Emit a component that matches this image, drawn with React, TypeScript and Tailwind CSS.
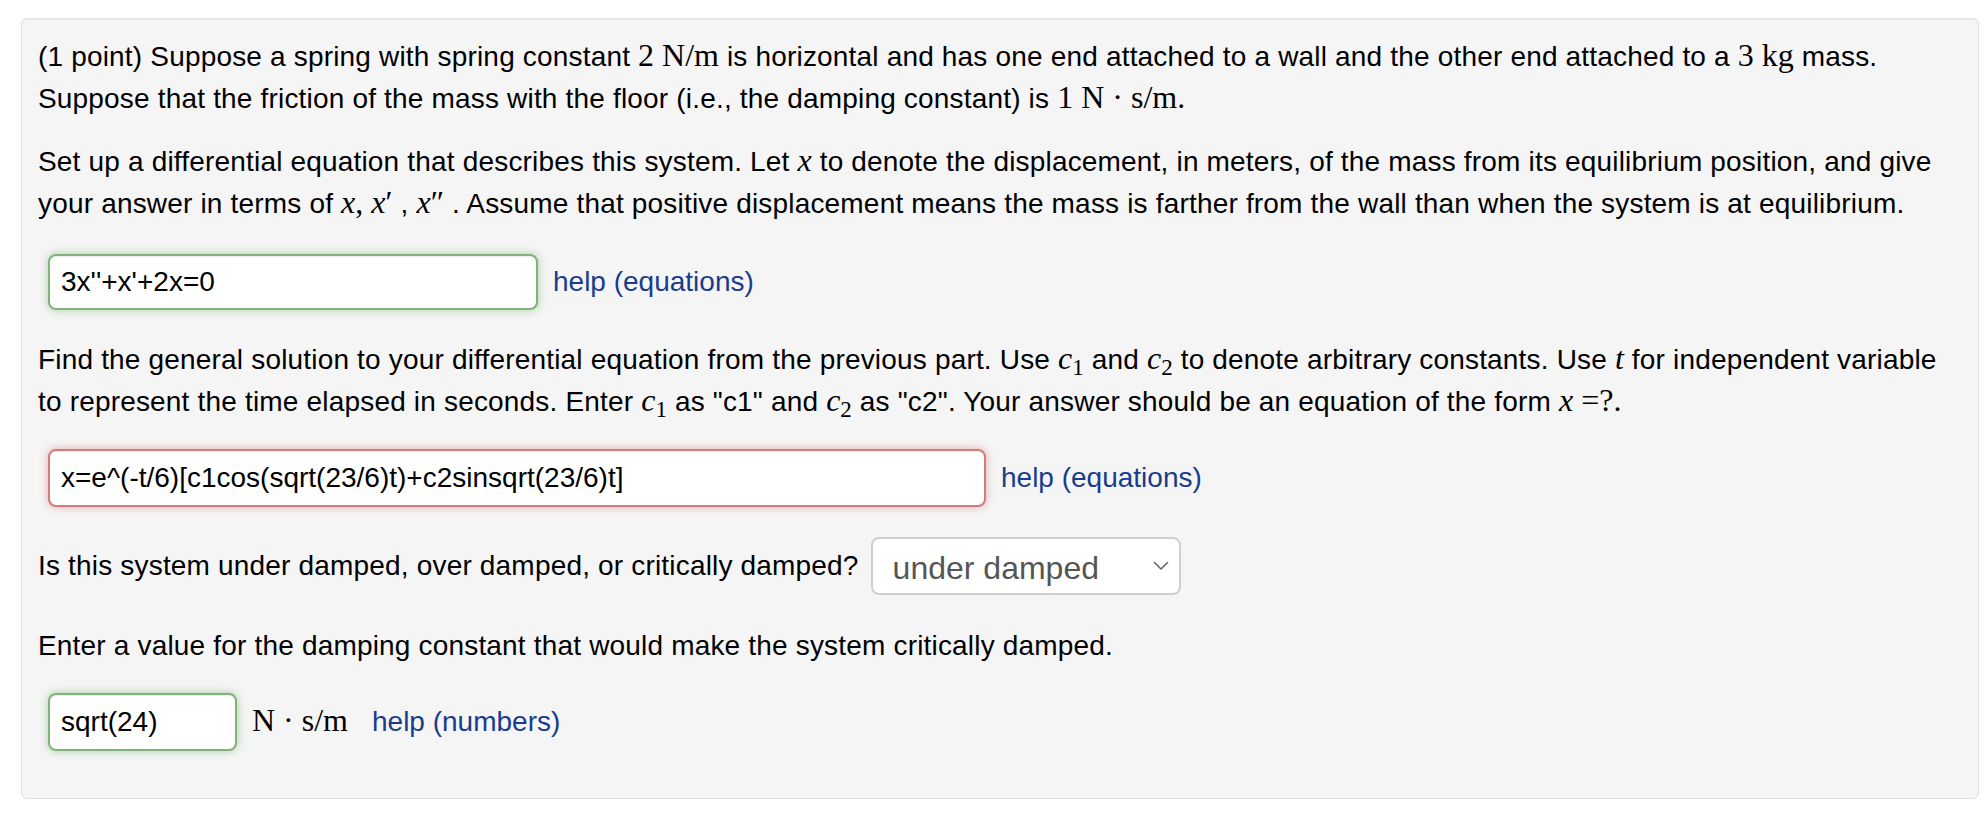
import React from "react";

function M({ children }: { children: React.ReactNode }) {
  return (
    <span className="font-['Liberation_Serif','Times_New_Roman',serif] text-[32px] leading-[0] tracking-normal">
      {children}
    </span>
  );
}

function I({ children }: { children: React.ReactNode }) {
  return <span className="italic">{children}</span>;
}

function Sub({ children }: { children: React.ReactNode }) {
  return <span className="align-[-6px] text-[23px] leading-[0] not-italic">{children}</span>;
}

function Help({ label, className }: { label: string; className: string }) {
  return <span className={`whitespace-nowrap tracking-normal text-[#1a3c8c] ${className}`}>{label}</span>;
}

export default function App() {
  const green =
    "border-[#80b27a] shadow-[0_0_8px_rgba(95,165,85,0.5),inset_0_1px_1px_rgba(0,0,0,0.075)]";
  const red =
    "border-[#d07c7c] shadow-[0_0_8px_rgba(200,85,85,0.45),inset_0_1px_1px_rgba(0,0,0,0.075)]";
  return (
    <div className="min-h-screen bg-white pt-[18px] font-['Liberation_Sans',Arial,sans-serif] text-[28px] leading-[42px] tracking-[0.18px] text-black">
      <div className="ml-[21px] w-[1958px] rounded-[6px] border border-[#e1e1e1] bg-[#f5f5f5] px-[16px] pt-[17px] pb-[47px] shadow-[inset_0_1px_1px_rgba(0,0,0,0.05)]">
        <div>
          <div className="h-[42px] whitespace-nowrap">
            (1 point) Suppose a spring with spring constant <M>2 N/m</M> is horizontal and has one end attached to a
            wall and the other end attached to a <M>3 kg</M> mass.
          </div>
          <div className="h-[42px] whitespace-nowrap">
            Suppose that the friction of the mass with the floor (i.e., the damping constant) is <M>1 N · s/m.</M>
          </div>
        </div>

        <div className="mt-[21px]">
          <div className="h-[42px] whitespace-nowrap">
            Set up a differential equation that describes this system. Let{" "}
            <M>
              <I>x</I>
            </M>{" "}
            to denote the displacement, in meters, of the mass from its equilibrium position, and give
          </div>
          <div className="h-[42px] whitespace-nowrap">
            your answer in terms of{" "}
            <M>
              <I>x</I>, <I>x</I>′
            </M>{" "}
            ,{" "}
            <M>
              <I>x</I>″
            </M>{" "}
            . Assume that positive displacement means the mass is farther from the wall than when the system is at
            equilibrium.
          </div>
        </div>

        <div className="mt-[29px] flex items-center">
          <div
            className={`ml-[10px] flex h-[56px] w-[490px] items-center rounded-[8px] border-2 bg-white pl-[11px] tracking-normal ${green}`}
          >
            3x''+x'+2x=0
          </div>
          <Help label="help (equations)" className="ml-[15px]" />
        </div>

        <div className="mt-[29px]">
          <div className="h-[42px] whitespace-nowrap">
            Find the general solution to your differential equation from the previous part. Use{" "}
            <M>
              <I>c</I>
              <Sub>1</Sub>
            </M>{" "}
            and{" "}
            <M>
              <I>c</I>
              <Sub>2</Sub>
            </M>{" "}
            to denote arbitrary constants. Use{" "}
            <M>
              <I>t</I>
            </M>{" "}
            for independent variable
          </div>
          <div className="h-[42px] whitespace-nowrap">
            to represent the time elapsed in seconds. Enter{" "}
            <M>
              <I>c</I>
              <Sub>1</Sub>
            </M>{" "}
            as "c1" and{" "}
            <M>
              <I>c</I>
              <Sub>2</Sub>
            </M>{" "}
            as "c2". Your answer should be an equation of the form{" "}
            <M>
              <I>x</I> =?.
            </M>
          </div>
        </div>

        <div className="mt-[26px] flex items-center">
          <div
            className={`ml-[10px] flex h-[58px] w-[938px] items-center rounded-[8px] border-2 bg-white pl-[11px] tracking-normal ${red}`}
          >
            x=e^(-t/6)[c1cos(sqrt(23/6)t)+c2sinsqrt(23/6)t]
          </div>
          <Help label="help (equations)" className="ml-[15px]" />
        </div>

        <div className="mt-[30px] flex h-[58px] items-center">
          <span className="whitespace-nowrap">Is this system under damped, over damped, or critically damped?</span>
          <div className="ml-[12px] flex h-[58px] w-[310px] items-center justify-between rounded-[8px] border-2 border-[#cfcfcf] bg-white pl-[20px] pr-[10px] text-[32px] leading-none tracking-normal text-[#555]">
            <span className="pt-[4px]">under damped</span>
            <svg width="16" height="10" viewBox="0 0 16 10" fill="none">
              <polyline
                points="1.5,1.5 8,8 14.5,1.5"
                stroke="#666"
                strokeWidth="1.6"
                strokeLinecap="round"
                strokeLinejoin="round"
              />
            </svg>
          </div>
        </div>

        <div className="mt-[30px] h-[42px] whitespace-nowrap">
          Enter a value for the damping constant that would make the system critically damped.
        </div>

        <div className="mt-[26px] flex items-center">
          <div
            className={`ml-[10px] flex h-[58px] w-[189px] items-center rounded-[8px] border-2 bg-white pl-[11px] tracking-normal ${green}`}
          >
            sqrt(24)
          </div>
          <span className="ml-[15px] whitespace-nowrap">
            <M>N · s/m</M>
          </span>
          <Help label="help (numbers)" className="ml-[24px]" />
        </div>
      </div>
    </div>
  );
}
